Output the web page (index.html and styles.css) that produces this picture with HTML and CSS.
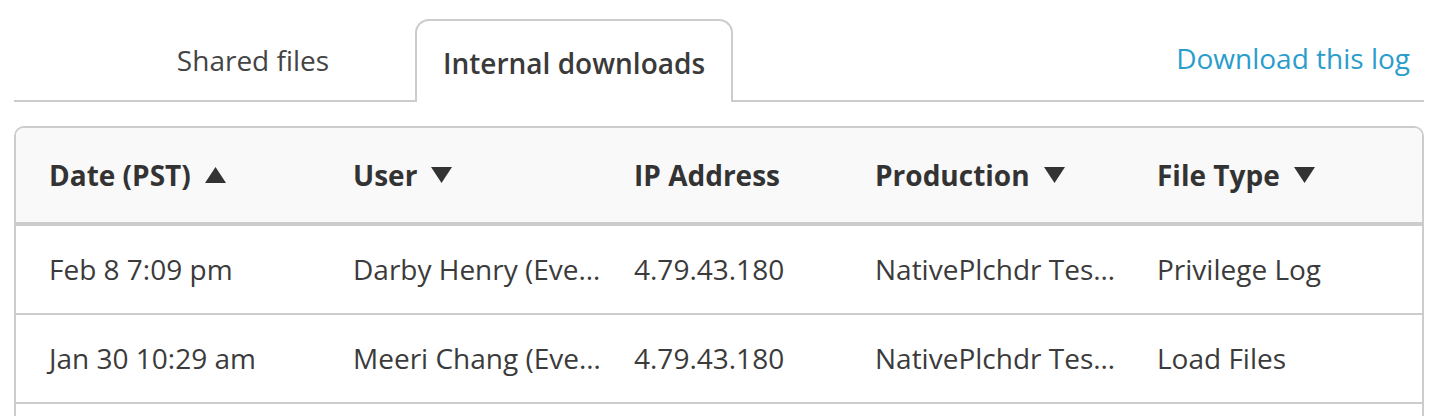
FILE: index.html
```html
<!DOCTYPE html>
<html lang="en">
<head>
<meta charset="utf-8">
<title>Download log</title>
<link rel="stylesheet" href="styles.css">
</head>
<body>
<div class="page">
  <div class="tabs-bar">
    <div class="tab">Shared files</div>
    <div class="tab tab-active">Internal downloads</div>
    <a class="download-link" href="#">Download this log</a>
  </div>

  <div class="log-table">
    <div class="row head-row">
      <div class="cell">Date (PST)<svg class="sort" viewBox="0 0 23 18" width="23" height="18"><path d="M11.5 1 L22 17 L1 17 Z"/></svg></div>
      <div class="cell">User<svg class="sort" viewBox="0 0 23 18" width="23" height="18"><path d="M1 1 L22 1 L11.5 17 Z"/></svg></div>
      <div class="cell">IP Address</div>
      <div class="cell">Production<svg class="sort" viewBox="0 0 23 18" width="23" height="18"><path d="M1 1 L22 1 L11.5 17 Z"/></svg></div>
      <div class="cell">File Type<svg class="sort" viewBox="0 0 23 18" width="23" height="18"><path d="M1 1 L22 1 L11.5 17 Z"/></svg></div>
    </div>
    <div class="row">
      <div class="cell">Feb 8 7:09 pm</div>
      <div class="cell cell-user">Darby Henry (Everlaw)</div>
      <div class="cell">4.79.43.180</div>
      <div class="cell">NativePlchdr Test Production</div>
      <div class="cell">Privilege Log</div>
    </div>
    <div class="row">
      <div class="cell">Jan 30 10:29 am</div>
      <div class="cell cell-user">Meeri Chang (Everlaw)</div>
      <div class="cell">4.79.43.180</div>
      <div class="cell">NativePlchdr Test Production</div>
      <div class="cell">Load Files</div>
    </div>
    <div class="row">
      <div class="cell">Jan 28 3:14 pm</div>
      <div class="cell cell-user">Darby Henry (Everlaw)</div>
      <div class="cell">4.79.43.180</div>
      <div class="cell">NativePlchdr Test Production</div>
      <div class="cell">Privilege Log</div>
    </div>
  </div>
</div>
</body>
</html>
```

FILE: styles.css
```css
html, body {
  margin: 0;
  padding: 0;
  background: #ffffff;
  overflow: hidden;
}

body {
  font-family: "Open Sans", "Liberation Sans", sans-serif;
  font-size: 28px;
  color: #3b3b3b;
}

.page {
  padding: 0 12px 0 14px;
}

.tabs-bar {
  display: flex;
  align-items: flex-end;
  height: 81px;
  padding-top: 19px;
  border-bottom: 2px solid #cccccc;
}

.tab {
  box-sizing: border-box;
  width: 318px;
  height: 83px;
  margin-bottom: -2px;
  display: flex;
  align-items: center;
  justify-content: center;
  padding-bottom: 4px;
  color: #444444;
  border: 2px solid transparent;
  border-bottom: none;
}

.tab:first-child {
  margin-left: 80px;
  margin-right: 3px;
}

.tab-active {
  font-weight: 600;
  color: #3a3a3a;
  padding-top: 2px;
  padding-bottom: 0;
  background: #ffffff;
  border-color: #cccccc;
  border-radius: 14px 14px 0 0;
}

.download-link {
  margin-left: auto;
  align-self: flex-start;
  margin-top: 20px;
  padding-right: 14px;
  color: #2b9dcc;
  text-decoration: none;
  line-height: 38px;
}

.log-table {
  margin-top: 24px;
  border: 2px solid #cccccc;
  border-radius: 10px;
  overflow: hidden;
}

.row {
  display: grid;
  grid-template-columns: 304px 281px 241px 282px 1fr;
  height: 87px;
  border-bottom: 2px solid #cccccc;
}

.head-row {
  height: 94px;
  background: #f9f9f9;
  border-bottom: 4px solid #cccccc;
  font-weight: 700;
  color: #333333;
}

.cell {
  display: flex;
  align-items: center;
  padding-left: 33px;
  padding-right: 2px;
  min-width: 0;
  white-space: nowrap;
  overflow: hidden;
  text-overflow: ellipsis;
}

.row:not(.head-row) .cell {
  display: block;
  line-height: 87px;
}

.row .cell-user {
  padding-right: 0;
  margin-right: -4px;
}

.sort {
  margin-left: 13px;
  flex: none;
  fill: #333333;
}
```
